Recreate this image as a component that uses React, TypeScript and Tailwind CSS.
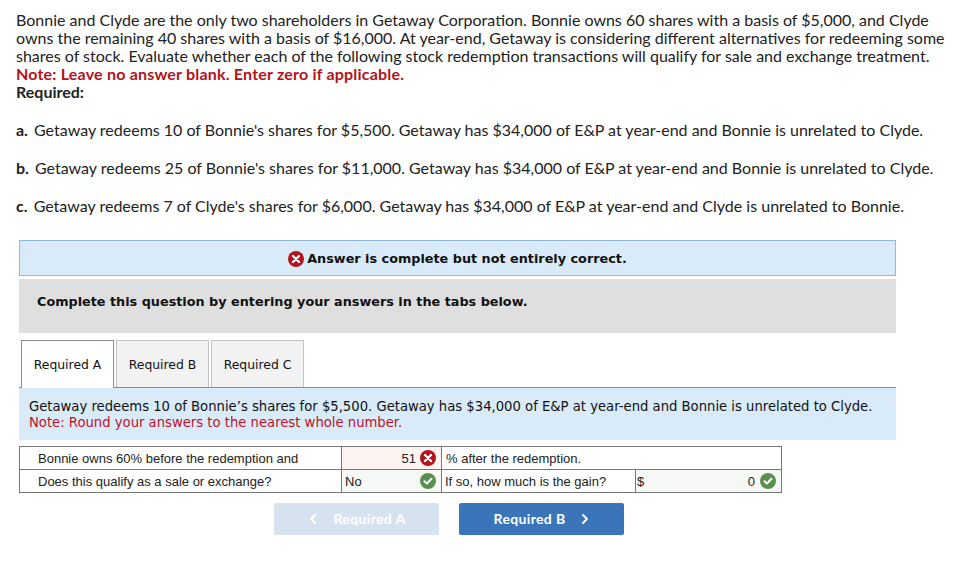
import { ChevronLeft, ChevronRight } from 'lucide-react';

const bodyFont = "font-['Lato','Open_Sans',sans-serif]";

function WrongIcon({ size = 16 }: { size?: number }) {
  return (
    <svg width={size} height={size} viewBox="0 0 16 16" className="shrink-0">
      <circle cx="8" cy="8" r="8" fill="#b5121b" />
      <path d="M5 5l6 6M11 5l-6 6" stroke="#fff" strokeWidth="2.4" strokeLinecap="round" />
    </svg>
  );
}

function RightIcon({ size = 16 }: { size?: number }) {
  return (
    <svg width={size} height={size} viewBox="0 0 16 16" className="shrink-0">
      <circle cx="8" cy="8" r="8" fill="#5a8f50" />
      <path d="M4.5 8.3l2.4 2.3 4.6-4.8" stroke="#fff" strokeWidth="2" fill="none" strokeLinecap="round" strokeLinejoin="round" />
    </svg>
  );
}

const parts = [
  { label: 'a.', text: "Getaway redeems 10 of Bonnie's shares for $5,500. Getaway has $34,000 of E&P at year-end and Bonnie is unrelated to Clyde." },
  { label: 'b.', text: "Getaway redeems 25 of Bonnie's shares for $11,000. Getaway has $34,000 of E&P at year-end and Bonnie is unrelated to Clyde." },
  { label: 'c.', text: "Getaway redeems 7 of Clyde's shares for $6,000. Getaway has $34,000 of E&P at year-end and Clyde is unrelated to Bonnie." },
];

export default function App() {
  return (
    <div className="w-[980px] h-[576px] bg-white overflow-hidden pt-[11px] text-[#222]">
      {/* Question */}
      <div className={`pl-4 text-[16px] leading-[18px] ${bodyFont}`}>
        <p className="whitespace-nowrap">Bonnie and Clyde are the only two shareholders in Getaway Corporation. Bonnie owns 60 shares with a basis of $5,000, and Clyde</p>
        <p className="whitespace-nowrap">owns the remaining 40 shares with a basis of $16,000. At year-end, Getaway is considering different alternatives for redeeming some</p>
        <p className="whitespace-nowrap">shares of stock. Evaluate whether each of the following stock redemption transactions will qualify for sale and exchange treatment.</p>
        <p className="font-bold tracking-[0.2px] text-[#b5121b]">Note: Leave no answer blank. Enter zero if applicable.</p>
        <p className="font-bold">Required:</p>
        <div className="mt-[20px] flex flex-col gap-[20px]">
          {parts.map((p) => (
            <p key={p.label} className="whitespace-nowrap">
              <span className="font-bold mr-[2px]">{p.label}</span> {p.text}
            </p>
          ))}
        </div>
      </div>

      <div className="ml-[19px] w-[877px] mt-[25px] font-['DejaVu_Sans',sans-serif]">
        {/* Result banner */}
        <div className="h-9 border border-[#8fb8e3] bg-[#d9ebf9] flex items-center justify-center gap-[3px] pt-px text-[12.8px] font-bold text-[#111]">
          <WrongIcon />
          <span>Answer is complete but not entirely correct.</span>
        </div>

        <div className="mt-[3px] h-[54px] bg-[#dfdfdf] pl-[18px] pt-[14px] text-[12.8px] font-bold leading-[18px] text-[#111]">
          Complete this question by entering your answers in the tabs below.
        </div>

        {/* Tabs */}
        <div className="mt-[7px] flex h-[48px] border-b border-[#8c8c8c] pl-[2px] gap-[2px] text-[12.4px] text-[#111]">
          <div className="w-[93px] h-[48px] border border-b-0 border-[#8c8c8c] bg-white flex items-center justify-center pt-px">Required A</div>
          <div className="w-[93px] h-[47px] border border-b-0 border-[#c4c4c4] bg-[#f2f2f2] flex items-center justify-center pt-[2px]">Required B</div>
          <div className="w-[93px] h-[47px] border border-b-0 border-[#c4c4c4] bg-[#f2f2f2] flex items-center justify-center pt-[2px]">Required C</div>
        </div>

        <div className="h-[52px] bg-[#d9ebf9] pl-[10px] pt-[11px] text-[13.2px] leading-4 text-[#111]">
          <p className="whitespace-nowrap">Getaway redeems 10 of Bonnie’s shares for $5,500. Getaway has $34,000 of E&amp;P at year-end and Bonnie is unrelated to Clyde.</p>
          <p className="text-[#c0102a]">Note: Round your answers to the nearest whole number.</p>
        </div>
      </div>

      {/* Answer table */}
      <div className="ml-[19px] mt-[6px] w-[763px] grid grid-cols-[322px_100px_194px_145px] border border-[#777] font-['Liberation_Sans',sans-serif] text-[13px] leading-[23px] text-[#222]">
        <div className="h-[23px] pl-[18px] border-b border-r border-[#777]">Bonnie owns 60% before the redemption and</div>
        <div className="h-[23px] border-b border-r border-[#777] bg-[#fdf3f1] flex items-center justify-end gap-[4px] pr-[5px]">
          <span>51</span>
          <WrongIcon />
        </div>
        <div className="col-span-2 h-[23px] pl-[4px] border-b border-[#777]">% after the redemption.</div>
        <div className="h-[22px] pl-[18px] border-r border-[#777]">Does this qualify as a sale or exchange?</div>
        <div className="h-[22px] border-r border-[#777] bg-[#f5f8f4] flex items-center justify-between pl-[3px] pr-[5px]">
          <span>No</span>
          <RightIcon />
        </div>
        <div className="h-[22px] pl-[3px] border-r border-[#777]">If so, how much is the gain?</div>
        <div className="h-[22px] bg-[#f5f8f4] flex items-center justify-between pl-[1px] pr-[5px]">
          <span>$</span>
          <span className="flex items-center gap-[5px]">
            <span>0</span>
            <RightIcon />
          </span>
        </div>
      </div>

      {/* Prev / next */}
      <div className={`ml-[274px] mt-[10px] flex gap-5 text-[14px] font-bold tracking-[0.35px] text-white ${bodyFont}`}>
        <div className="w-[165px] h-8 rounded-[2px] bg-[#d7e2f0] flex items-center justify-center gap-[12px] pr-[2px] pb-px">
          <ChevronLeft size={16} strokeWidth={3} />
          <span>Required A</span>
        </div>
        <div className="w-[165px] h-8 rounded-[2px] bg-[#3a75b9] flex items-center justify-center gap-[12px] pl-[4px] pb-px">
          <span>Required B</span>
          <ChevronRight size={16} strokeWidth={3} />
        </div>
      </div>
    </div>
  );
}
